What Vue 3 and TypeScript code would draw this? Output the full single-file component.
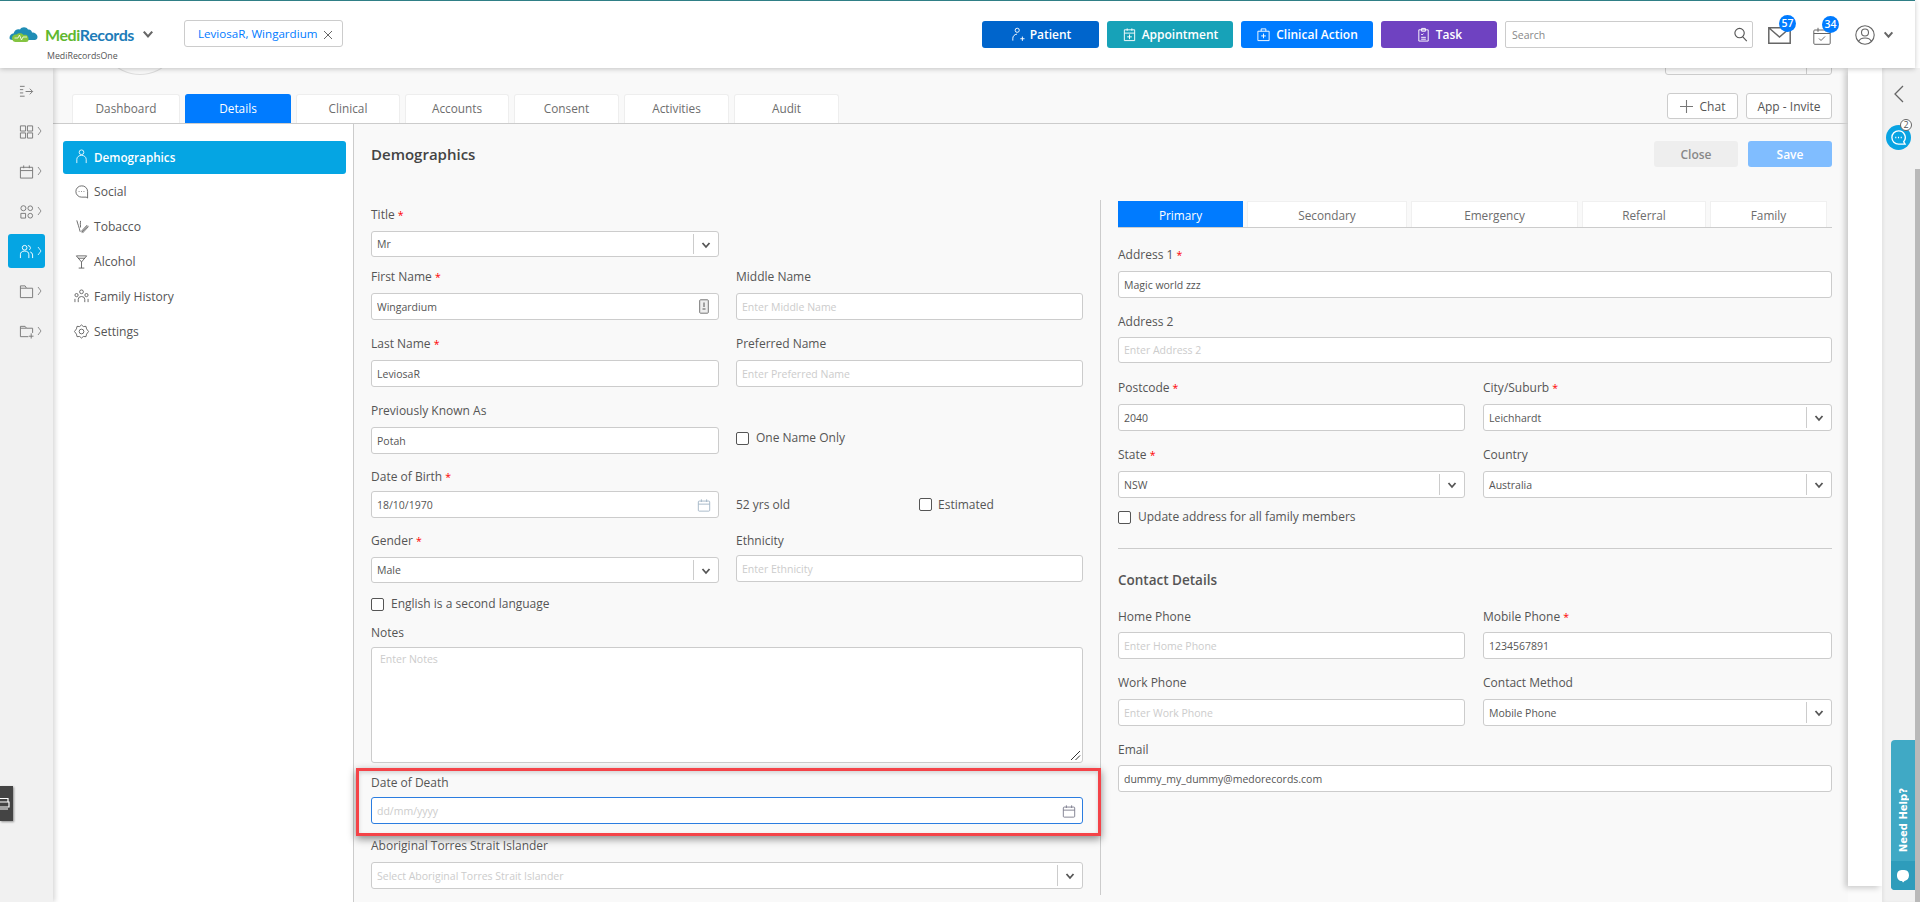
<script setup lang="ts">
interface RailItem {
  paths: string[]
  active?: boolean
}

interface NavItem {
  label: string
  paths: string[]
  active?: boolean
}

const railItems: RailItem[] = [
  { paths: ['M1 2.500h5M1 6h3.500M1 9.500h3.500M1 13h5M7 8h7.500M11.500 5l3 3-3 3'] },
  { paths: ['M1.500 2h5.500v5.500H1.500zM9 2h5.500v5.500H9zM1.500 9.500h5.500V15H1.500zM9 9.500h5.500V15H9z'] },
  { paths: ['M1.500 3.500h13V15h-13zM1.500 7h13M5 1.500v3M11 1.500v3'] },
  {
    paths: [
      'M2 4.500a2.700 2.700 0 1 0 5.400 0a2.700 2.700 0 1 0-5.400 0',
      'M9.500 4.500a2.500 2.500 0 1 0 5 0a2.500 2.500 0 1 0-5 0',
      'M2 10h5v5H2z',
      'M9.500 12.500a2.500 2.500 0 1 0 5 0a2.500 2.500 0 1 0-5 0'
    ]
  },
  {
    active: true,
    paths: [
      'M3.500 4a2.500 2.500 0 1 0 5 0a2.500 2.500 0 1 0-5 0',
      'M1.500 15v-3.500a4 3.500 0 0 1 9 0V15',
      'M9.500 1.700a2.500 2.500 0 0 1 1.500 4.600',
      'M12 8.500a3.500 3.500 0 0 1 2.500 3.200V15'
    ]
  },
  { paths: ['M1.500 14.500V2h5l1.500 2.500h6.500v10zM1.500 4.500H8'] },
  { paths: ['M1.500 13.500V2.500h5l1.500 2h6.500v5M10 13.500H1.500M1.500 4.500H8M13 10v5.500M10.500 13h5'] }
]

const navItems: NavItem[] = [
  {
    label: 'Demographics',
    active: true,
    paths: ['M5.500 3.500a2.500 2.500 0 1 0 5 0a2.500 2.500 0 1 0-5 0', 'M3 15v-4a3.500 3 0 0 1 10 0v4']
  },
  {
    label: 'Social',
    paths: [
      'M8 2a6 6 0 1 0 0 12h5l1.500 1V8A6 6 0 0 0 8 2z',
      'M5 8h.8M7.600 8h.8M10.200 8h.8'
    ]
  },
  {
    label: 'Tobacco',
    paths: [
      'M3 1.500c1 4 2.500 7 3.500 12M7 2c-.5 3 0 5 0 7',
      'M7.500 13.500L14 6.500M8.200 14.200L14.700 7.200M9 15L15.500 8'
    ]
  },
  { label: 'Alcohol', paths: ['M2.500 2h11L8 8.500zM8 8.500V15M5 15h6M4.300 4.500h7.400'] },
  {
    label: 'Family History',
    paths: [
      'M6 3a2 2 0 1 0 4 0a2 2 0 1 0-4 0',
      'M1 6.500a1.700 1.700 0 1 0 3.400 0a1.700 1.700 0 1 0-3.400 0',
      'M11.600 6.500a1.700 1.700 0 1 0 3.400 0a1.700 1.700 0 1 0-3.400 0',
      'M4.500 14v-3a3.500 3 0 0 1 7 0v3M1 14v-3.500M15 14v-3.500'
    ]
  },
  {
    label: 'Settings',
    paths: [
      'M8 1l2 1.700 2.800-.2.600 2.700L15.500 8l-2.100 2.800-.6 2.700-2.800-.2L8 15l-2-1.700-2.800.2-.6-2.700L.5 8l2.100-2.800.6-2.700 2.800.2z',
      'M5.500 8a2.500 2.500 0 1 0 5 0a2.500 2.500 0 1 0-5 0'
    ]
  }
]

const mainTabs = [
  { label: 'Dashboard', width: 108 },
  { label: 'Details', width: 106, active: true },
  { label: 'Clinical', width: 104 },
  { label: 'Accounts', width: 104 },
  { label: 'Consent', width: 105 },
  { label: 'Activities', width: 105 },
  { label: 'Audit', width: 105 }
]

const addressTabs = [
  { label: 'Primary', width: 125, active: true },
  { label: 'Secondary', width: 160 },
  { label: 'Emergency', width: 167 },
  { label: 'Referral', width: 124 },
  { label: 'Family', width: 117 }
]
</script>

<template>
  <div class="page">
    <svg class="defs" aria-hidden="true">
      <symbol id="chev" viewBox="0 0 10 10">
        <path d="M1.500 3l3.500 4 3.500-4" fill="none" stroke="currentColor" stroke-width="1.800" />
      </symbol>
      <symbol id="cal" viewBox="0 0 16 16">
        <path
          d="M2.500 3.500h11a1 1 0 0 1 1 1V14a1 1 0 0 1-1 1h-11a1 1 0 0 1-1-1V4.500a1 1 0 0 1 1-1zM1.500 7h13M5 1.500v3M11 1.500v3"
          fill="none"
          stroke="currentColor"
        />
      </symbol>
    </svg>

    <header class="topbar">
      <div class="brand">
        <div class="brand-row">
          <svg class="cloud" viewBox="0 0 30 17">
            <path
              d="M1 12c0-3 2-4.500 4-4.500C6 4 9 2.500 11.500 3.500 13 .5 18 .5 19.500 3.500c2-.5 4 1 4 3 3 0 5.500 2 5.500 4.500s-2 3-4 3H4c-2 0-3-1-3-2z"
              fill="#1f8db5"
            />
            <path
              d="M4 14c-1.500-3 1-6 4-5.500 2-2 6-1.500 7 .5 3-1 5.500 1 5 5 0 1-1 2-2.500 2H7c-1.500 0-2.500-1-3-2z"
              fill="#84c441"
            />
            <path d="M6 12h3.500l1.500-3 2 5 1.500-3h4" fill="none" stroke="#fff" stroke-width=".8" />
          </svg>
          <span class="brand-name"><span class="medi">Medi</span><span class="rec">Records</span></span>
          <svg class="brand-chev"><use href="#chev" /></svg>
        </div>
        <div class="brand-sub">MediRecordsOne</div>
      </div>

      <div class="chip">
        <span>LeviosaR, Wingardium</span>
        <svg class="chip-x" viewBox="0 0 10 10">
          <path d="M1 1l8 8M9 1l-8 8" fill="none" stroke="#666" />
        </svg>
      </div>

      <div class="actions">
        <button class="act act-patient">
          <svg viewBox="0 0 16 16">
            <path d="M5.500 3.500a2.200 2.200 0 1 0 4.400 0a2.200 2.200 0 1 0-4.400 0M3 14.500v-2.500c0-2 1.500-4 4.500-4.500M11 12.500h4.500M13.200 10.200v4.600" />
          </svg>
          Patient
        </button>
        <button class="act act-appt">
          <svg viewBox="0 0 16 16">
            <path d="M2.500 3h11v11.500h-11zM2.500 6.500h11M5.500 1.500V4M10.500 1.500V4M8 8v5M5.500 10.500h5" />
          </svg>
          Appointment
        </button>
        <button class="act act-clin">
          <svg viewBox="0 0 16 16">
            <path d="M2 4.500h12v10H2zM5.500 4.500V2h5v2.500M8 7v5M5.500 9.500h5" />
          </svg>
          Clinical Action
        </button>
        <button class="act act-task">
          <svg viewBox="0 0 16 16">
            <path d="M3 3h10v12H3zM6 1.500h4V4.500H6zM5.500 7.500l1 1 1.500-1.500M5.500 11h5M5.500 13h5" />
          </svg>
          Task
        </button>
      </div>

      <div class="search">
        <input class="search-input" placeholder="Search" />
        <svg class="search-icon" viewBox="0 0 16 16">
          <path d="M2 6.500a5 5 0 1 0 10 0a5 5 0 1 0-10 0M10.200 10.200l4.500 4.800" fill="none" stroke="#555" stroke-width="1.200" />
        </svg>
      </div>

      <div class="top-ic mail">
        <svg viewBox="0 0 23 17">
          <path d="M.8.8h21.400v15.400H.8zM.8.8L11.500 10 22.200.8" fill="none" stroke="#666" stroke-width="1.500" />
        </svg>
        <span class="badge">57</span>
      </div>
      <div class="top-ic cal">
        <svg viewBox="0 0 18 18">
          <path
            d="M1.800 3h14.400a1 1 0 0 1 1 1v12.300a1 1 0 0 1-1 1H1.800a1 1 0 0 1-1-1V4a1 1 0 0 1 1-1zM.8 6.500h16.400M5 .8v4M13 .8v4M6 11.500l2 2 4-4"
            fill="none"
            stroke="#666"
          />
        </svg>
        <span class="badge">34</span>
      </div>
      <svg class="top-user" viewBox="0 0 20 20">
        <path
          d="M.8 10a9.200 9.200 0 1 0 18.400 0a9.200 9.200 0 1 0-18.400 0M6.500 7.500a3.500 3.500 0 1 0 7 0a3.500 3.500 0 1 0-7 0M3.800 16.500c.7-2.500 3-3.500 6.200-3.500s5.500 1 6.200 3.500"
          fill="none"
          stroke="#666"
          stroke-width="1.100"
        />
      </svg>
      <svg class="top-chev"><use href="#chev" /></svg>
    </header>

    <div class="layout">
      <nav class="rail">
        <div v-for="(item, i) in railItems" :key="i" class="rail-row">
          <div class="rail-btn" :class="{ on: item.active }">
            <svg class="rail-ic" viewBox="0 0 16 16">
              <path v-for="d in item.paths" :key="d" :d="d" />
            </svg>
            <svg v-if="i > 0" class="rail-arrow" viewBox="0 0 5 10">
              <path d="M1 1l3 4-3 4" />
            </svg>
          </div>
        </div>
      </nav>

      <main class="content">
        <div class="strip">
          <span class="avatar"></span>
          <span class="clipped-select"></span>
          <div class="tabs">
            <div
              v-for="tab in mainTabs"
              :key="tab.label"
              class="tab"
              :class="{ on: tab.active }"
              :style="{ width: tab.width + 'px' }"
            >
              {{ tab.label }}
            </div>
          </div>
          <div class="strip-btns">
            <button class="ghost chat">
              <svg viewBox="0 0 12 12"><path d="M6 0v12M0 6h12" fill="none" stroke="#777" /></svg>
              Chat
            </button>
            <button class="ghost invite">App - Invite</button>
          </div>
        </div>

        <div class="split">
          <aside class="side">
            <div v-for="item in navItems" :key="item.label" class="nav" :class="{ on: item.active }">
              <svg class="nav-ic" viewBox="0 0 16 16">
                <path v-for="d in item.paths" :key="d" :d="d" />
              </svg>
              {{ item.label }}
            </div>
          </aside>

          <section class="main">
            <div class="head">
              <h2 class="title">Demographics</h2>
              <button class="btn-close">Close</button>
              <button class="btn-save">Save</button>
            </div>

            <div class="form">
              <div class="col-left">
                <div class="row">
                  <div class="field">
                    <label class="lbl">Title <i>*</i></label>
                    <div class="select short"><span>Mr</span><svg class="sel-chev"><use href="#chev" /></svg></div>
                  </div>
                </div>

                <div class="row mt-12">
                  <div class="field">
                    <label class="lbl">First Name <i>*</i></label>
                    <div class="with-ic">
                      <input class="inp" value="Wingardium" />
                      <svg class="inp-ic card" viewBox="0 0 10 15">
                        <path d="M1.500.8h7a.8.8 0 0 1 .8.8v11.800a.8.8 0 0 1-.8.8h-7a.8.8 0 0 1-.8-.8V1.600a.8.8 0 0 1 .8-.8z" fill="#eee" stroke="#777" />
                        <path d="M5 3.500v4.500M3.500 10h3" fill="none" stroke="#555" />
                      </svg>
                    </div>
                  </div>
                  <div class="field">
                    <label class="lbl">Middle Name</label>
                    <input class="inp" placeholder="Enter Middle Name" />
                  </div>
                </div>

                <div class="row mt-16">
                  <div class="field">
                    <label class="lbl">Last Name <i>*</i></label>
                    <input class="inp" value="LeviosaR" />
                  </div>
                  <div class="field">
                    <label class="lbl">Preferred Name</label>
                    <input class="inp" placeholder="Enter Preferred Name" />
                  </div>
                </div>

                <div class="row mt-16">
                  <div class="field">
                    <label class="lbl">Previously Known As</label>
                    <input class="inp" value="Potah" />
                  </div>
                  <label class="check one-name"><span class="box"></span>One Name Only</label>
                </div>

                <div class="row mt-15">
                  <div class="field tight">
                    <label class="lbl">Date of Birth <i>*</i></label>
                    <div class="with-ic">
                      <input class="inp" value="18/10/1970" />
                      <svg class="inp-ic dob"><use href="#cal" /></svg>
                    </div>
                  </div>
                  <div class="age-row">
                    <span class="age">52 yrs old</span>
                    <label class="check"><span class="box"></span>Estimated</label>
                  </div>
                </div>

                <div class="row mt-15">
                  <div class="field">
                    <label class="lbl">Gender <i>*</i></label>
                    <div class="select short"><span>Male</span><svg class="sel-chev"><use href="#chev" /></svg></div>
                  </div>
                  <div class="field tight">
                    <label class="lbl">Ethnicity</label>
                    <input class="inp" placeholder="Enter Ethnicity" />
                  </div>
                </div>

                <label class="check mt-13"><span class="box"></span>English is a second language</label>

                <div class="field tight mt-13">
                  <label class="lbl">Notes</label>
                  <div class="with-ic">
                    <textarea class="area" placeholder="Enter Notes"></textarea>
                    <svg class="inp-ic grip" viewBox="0 0 11 11">
                      <path d="M10 1L1 10M10 5.500L5.500 10" fill="none" stroke="#333" />
                    </svg>
                  </div>
                </div>

                <div class="field tight mt-12 flagged">
                  <span class="flag"></span>
                  <label class="lbl">Date of Death</label>
                  <div class="with-ic">
                    <input class="inp focus" placeholder="dd/mm/yyyy" />
                    <svg class="inp-ic dod"><use href="#cal" /></svg>
                  </div>
                </div>

                <div class="field mt-14">
                  <label class="lbl">Aboriginal Torres Strait Islander</label>
                  <div class="select empty">
                    <span>Select Aboriginal Torres Strait Islander</span>
                    <svg class="sel-chev"><use href="#chev" /></svg>
                  </div>
                </div>
              </div>

              <div class="col-right">
                <div class="addr-tabs">
                  <div
                    v-for="tab in addressTabs"
                    :key="tab.label"
                    class="addr-tab"
                    :class="{ on: tab.active }"
                    :style="{ width: tab.width + 'px' }"
                  >
                    {{ tab.label }}
                  </div>
                </div>

                <div class="field mt-19">
                  <label class="lbl">Address 1 <i>*</i></label>
                  <input class="inp" value="Magic world zzz" />
                </div>
                <div class="field snug mt-16">
                  <label class="lbl">Address 2</label>
                  <input class="inp low" placeholder="Enter Address 2" />
                </div>

                <div class="pair mt-17">
                  <div class="field">
                    <label class="lbl">Postcode <i>*</i></label>
                    <input class="inp" value="2040" />
                  </div>
                  <div class="field">
                    <label class="lbl">City/Suburb <i>*</i></label>
                    <div class="select"><span>Leichhardt</span><svg class="sel-chev"><use href="#chev" /></svg></div>
                  </div>
                </div>

                <div class="pair mt-16">
                  <div class="field">
                    <label class="lbl">State <i>*</i></label>
                    <div class="select"><span>NSW</span><svg class="sel-chev"><use href="#chev" /></svg></div>
                  </div>
                  <div class="field">
                    <label class="lbl">Country</label>
                    <div class="select"><span>Australia</span><svg class="sel-chev"><use href="#chev" /></svg></div>
                  </div>
                </div>

                <label class="check mt-11"><span class="box"></span>Update address for all family members</label>

                <hr class="rule" />
                <h3 class="sub">Contact Details</h3>

                <div class="pair mt-20">
                  <div class="field snug">
                    <label class="lbl">Home Phone</label>
                    <input class="inp" placeholder="Enter Home Phone" />
                  </div>
                  <div class="field snug">
                    <label class="lbl">Mobile Phone <i>*</i></label>
                    <input class="inp" value="1234567891" />
                  </div>
                </div>

                <div class="pair mt-16">
                  <div class="field">
                    <label class="lbl">Work Phone</label>
                    <input class="inp" placeholder="Enter Work Phone" />
                  </div>
                  <div class="field">
                    <label class="lbl">Contact Method</label>
                    <div class="select"><span>Mobile Phone</span><svg class="sel-chev"><use href="#chev" /></svg></div>
                  </div>
                </div>

                <div class="field snug mt-16">
                  <label class="lbl">Email</label>
                  <input class="inp" value="dummy_my_dummy@medorecords.com" />
                </div>
              </div>
            </div>
          </section>
        </div>
      </main>

      <div class="drawer"><div class="drawer-panel"></div></div>

      <aside class="siderail">
        <svg class="side-back" viewBox="0 0 12 20">
          <path d="M10 2L2 10l8 8" fill="none" stroke="#666" stroke-width="1.300" />
        </svg>
        <div class="bubble">
          <svg viewBox="0 0 18 18">
            <path d="M9 2a7 7 0 1 0 0 14h7l-1.500-2.500A7 7 0 0 0 9 2z" fill="none" stroke="#fff" stroke-width="1.400" />
            <path d="M5.500 9h1.200M8.400 9h1.200M11.300 9h1.200" stroke="#fff" stroke-width="1.500" />
          </svg>
          <span class="bubble-count">2</span>
        </div>
        <div class="help">
          <span class="help-text">Need Help?</span>
          <div class="help-ic">
            <svg viewBox="0 0 14 14">
              <path d="M7 1c3.500 0 6 1 6 5.500 0 3-2 5-4.500 5.500L7 13.500 6 12C3 12 1 10 1 6.500 1 2 3.500 1 7 1z" fill="#fff" />
            </svg>
          </div>
        </div>
      </aside>

      <div class="scroll"><div class="scroll-thumb"></div></div>
    </div>

    <div class="print-tab">
      <svg viewBox="0 0 13 14">
        <path d="M-2 5V1.500h10V5M-2 5h11v5H-2zM0 12h8" fill="none" stroke="#fff" stroke-width="1.200" />
      </svg>
    </div>
  </div>
</template>

<style scoped>
.page {
  position: relative;
  width: 1920px;
  height: 902px;
  overflow: hidden;
  display: flex;
  flex-direction: column;
  font-family: 'Open Sans', sans-serif;
  font-size: 12px;
  color: #555;
  background: #fff;
}

.defs {
  position: absolute;
  width: 0;
  height: 0;
}

/* top bar */
.topbar {
  position: relative;
  z-index: 5;
  flex: none;
  box-sizing: border-box;
  width: 1915px;
  height: 68px;
  padding-top: 1px;
  display: flex;
  align-items: flex-start;
  border-top: 1px solid #2f7f86;
  background: #fff;
  box-shadow: 0 1px 5px rgba(0, 0, 0, 0.22);
}

.brand {
  width: 184px;
  flex: none;
  padding: 22px 0 0 8px;
  box-sizing: border-box;
}

.brand-row {
  display: flex;
  align-items: center;
  height: 20px;
}

.cloud {
  width: 31px;
  height: 17px;
  margin-right: 6px;
}

.brand-name {
  font-family: Lato, 'Liberation Sans', sans-serif;
  font-size: 16px;
  font-weight: 700;
  letter-spacing: -0.4px;
}

.medi {
  color: #5fb82f;
}

.rec {
  color: #1d7cb8;
}

.brand-chev {
  width: 12px;
  height: 12px;
  margin-left: 8px;
  color: #666;
}

.brand-sub {
  margin: 5px 0 0 39px;
  font-size: 8.8px;
  line-height: 14px;
  color: #555;
}

.chip {
  flex: none;
  box-sizing: border-box;
  width: 159px;
  height: 27px;
  margin-top: 18px;
  padding-left: 13px;
  display: flex;
  align-items: center;
  gap: 6px;
  border: 1px solid #ccc;
  border-radius: 3px;
  color: #007bff;
  font-size: 11.6px;
}

.chip-x {
  width: 10px;
  height: 10px;
  margin-top: 2px;
}

.actions {
  margin: 19px 0 0 639px;
  display: flex;
  gap: 8px;
}

.act {
  display: flex;
  align-items: center;
  justify-content: center;
  gap: 5px;
  box-sizing: border-box;
  height: 27px;
  padding: 0;
  border: 0;
  border-radius: 3px;
  color: #fff;
  font: 600 12px 'Open Sans', sans-serif;
}

.act svg {
  width: 15px;
  height: 15px;
  fill: none;
  stroke: #fff;
  stroke-width: 1;
}

.act-patient {
  width: 117px;
  background: #0065cc;
}

.act-appt {
  width: 126px;
  background: #17a2b8;
}

.act-clin {
  width: 132px;
  background: #007bff;
}

.act-task {
  width: 116px;
  background: #6f42c1;
}

.search {
  position: relative;
  margin: 19px 0 0 8px;
  width: 248px;
}

.search-input {
  box-sizing: border-box;
  width: 100%;
  height: 27px;
  padding: 0 28px 0 6px;
  border: 1px solid #ccc;
  border-radius: 2px;
  outline: 0;
  font: 10.5px 'Open Sans', sans-serif;
}

.search-input::placeholder {
  color: #888;
}

.search-icon {
  position: absolute;
  right: 5px;
  top: 6px;
  width: 15px;
  height: 15px;
}

.top-ic {
  position: relative;
  flex: none;
}

.top-ic svg {
  display: block;
  width: 100%;
  height: 100%;
}

.mail {
  width: 23px;
  height: 17px;
  margin: 25px 0 0 15px;
}

.cal {
  width: 18px;
  height: 18px;
  margin: 25px 0 0 22px;
}

.badge {
  position: absolute;
  top: -12px;
  right: -5px;
  width: 17px;
  height: 17px;
  border-radius: 50%;
  background: #007bff;
  color: #fff;
  font-size: 10.5px;
  font-weight: 600;
  line-height: 17px;
  text-align: center;
}

.cal .badge {
  right: -8px;
  top: -11px;
}

.top-user {
  flex: none;
  width: 20px;
  height: 20px;
  margin: 23px 0 0 24px;
}

.top-chev {
  flex: none;
  width: 11px;
  height: 11px;
  margin: 27px 0 0 8px;
  color: #666;
}

/* page body */
.layout {
  flex: 1;
  min-height: 0;
  display: flex;
}

.rail {
  position: relative;
  z-index: 2;
  flex: none;
  width: 53px;
  padding-top: 3px;
  box-sizing: border-box;
  background: #f1f1f1;
  box-shadow: 2px 0 5px rgba(0, 0, 0, 0.16);
}

.rail-row {
  height: 40px;
  display: flex;
  align-items: center;
}

.rail-btn {
  box-sizing: border-box;
  width: 37px;
  height: 34px;
  margin-left: 8px;
  padding-left: 11px;
  display: flex;
  align-items: center;
  gap: 3px;
  border-radius: 3px;
  color: #777;
}

.rail-btn.on {
  background: #05a5e3;
  color: #fff;
}

.rail-ic {
  flex: none;
  width: 15px;
  height: 15px;
  fill: none;
  stroke: currentColor;
  stroke-width: 1;
}

.rail-arrow {
  flex: none;
  width: 5px;
  height: 10px;
  fill: none;
  stroke: currentColor;
  stroke-width: 0.8;
}

.content {
  flex: none;
  width: 1795px;
  display: flex;
  flex-direction: column;
  background: #f9f9f9;
}

.strip {
  position: relative;
  flex: none;
  box-sizing: border-box;
  height: 56px;
  padding-left: 19px;
  display: flex;
  align-items: flex-end;
  justify-content: space-between;
  border-bottom: 1px solid #ccc;
}

.avatar {
  position: absolute;
  left: 41px;
  top: -100px;
  width: 90px;
  height: 105px;
  border: 1px solid #ddd;
  border-radius: 50%;
}

.clipped-select {
  position: absolute;
  right: 16px;
  top: -20px;
  width: 167px;
  height: 27px;
  box-sizing: border-box;
  border: 1px solid #ccc;
  border-radius: 3px;
  background: linear-gradient(#ccc, #ccc) no-repeat right 24px top / 1px 100%;
}

.tabs {
  display: flex;
  gap: 5px;
}

.tab {
  box-sizing: border-box;
  height: 29px;
  line-height: 27px;
  text-align: center;
  border: 1px solid #eee;
  border-bottom: 0;
  border-radius: 3px 3px 0 0;
  background: #fff;
  color: #6d6d6d;
  font-size: 11.8px;
}

.tab.on {
  border-color: #007bff;
  background: #007bff;
  color: #fff;
}

.strip-btns {
  display: flex;
  gap: 8px;
  padding: 0 16px 4px 0;
}

.ghost {
  box-sizing: border-box;
  height: 26px;
  padding: 0;
  display: flex;
  align-items: center;
  justify-content: center;
  gap: 7px;
  border: 1px solid #ccc;
  border-radius: 3px;
  background: #fff;
  color: #555;
  font: 12px 'Open Sans', sans-serif;
}

.chat {
  width: 71px;
}

.chat svg {
  width: 13px;
  height: 13px;
}

.invite {
  width: 86px;
}

.split {
  flex: 1;
  min-height: 0;
  display: flex;
}

.side {
  flex: none;
  box-sizing: border-box;
  width: 301px;
  padding: 17px 7px 0 10px;
  border-right: 1px solid #ccc;
  background: #fff;
}

.nav {
  height: 35px;
  display: flex;
  align-items: center;
  gap: 4px;
  padding-left: 10px;
  color: #555;
  font-size: 12.1px;
}

.nav.on {
  box-sizing: border-box;
  height: 33px;
  padding-bottom: 2px;
  border-radius: 3px;
  background: #05a5e3;
  color: #fff;
  font-size: 11.7px;
  font-weight: 600;
}

.nav-ic {
  flex: none;
  width: 17px;
  height: 15px;
  fill: none;
  stroke: currentColor;
  stroke-width: 0.9;
}

.main {
  flex: 1;
  min-width: 0;
  padding: 17px 16px 0 17px;
}

.head {
  height: 26px;
  display: flex;
  align-items: center;
}

.title {
  flex: 1;
  margin: 0;
  font-size: 15px;
  font-weight: 600;
  color: #444;
}

.btn-close,
.btn-save {
  box-sizing: border-box;
  width: 84px;
  height: 26px;
  padding: 0;
  border: 0;
  border-radius: 3px;
  font: 600 12px 'Open Sans', sans-serif;
}

.btn-close {
  background: #eee;
  color: #888;
}

.btn-save {
  margin-left: 10px;
  background: #80bdff;
  color: #fff;
}

.form {
  display: grid;
  grid-template-columns: 712px 732px;
  column-gap: 17px;
}

.col-left {
  padding-top: 40px;
  display: flex;
  flex-direction: column;
}

.col-right {
  box-sizing: border-box;
  height: 695px;
  margin-top: 33px;
  padding: 1px 0 0 17px;
  border-left: 1px solid #ccc;
  display: flex;
  flex-direction: column;
}

.row {
  display: grid;
  grid-template-columns: 348px 347px;
  column-gap: 17px;
}

.pair {
  display: grid;
  grid-template-columns: 347px 349px;
  column-gap: 18px;
}

.mt-11 {
  margin-top: 11px;
}

.mt-12 {
  margin-top: 12px;
}

.mt-13 {
  margin-top: 13px;
}

.mt-14 {
  margin-top: 14px;
}

.mt-15 {
  margin-top: 15px;
}

.mt-16 {
  margin-top: 16px;
}

.mt-17 {
  margin-top: 17px;
}

.mt-19 {
  margin-top: 19px;
}

.mt-20 {
  margin-top: 20px;
}

.field {
  position: relative;
  display: flex;
  flex-direction: column;
  gap: 8px;
  min-width: 0;
}

.field.tight {
  gap: 6px;
}

.field.snug {
  gap: 7px;
}

.lbl {
  display: block;
  height: 16px;
  line-height: 16px;
  font-size: 12px;
  color: #555;
}

.lbl i {
  color: #f00;
  font-size: 10.5px;
  font-style: normal;
}

.inp {
  box-sizing: border-box;
  display: block;
  width: 100%;
  height: 27px;
  padding: 0 5px;
  border: 1px solid #ccc;
  border-radius: 3px;
  outline: 0;
  background: #fff;
  color: #555;
  font: 10.5px 'Open Sans', sans-serif;
}

.inp.low {
  height: 26px;
}

.inp::placeholder,
.area::placeholder {
  color: #ccc;
}

.inp.focus {
  border-color: #2b7de0;
}

.with-ic {
  position: relative;
}

.inp-ic {
  position: absolute;
}

.card {
  right: 10px;
  top: 6px;
  width: 10px;
  height: 15px;
}

.dob {
  right: 8px;
  top: 7px;
  width: 14px;
  height: 14px;
  color: #9fb2c4;
}

.dod {
  right: 7px;
  top: 7px;
  width: 14px;
  height: 14px;
  color: #778;
}

.grip {
  right: 2px;
  bottom: 2px;
  width: 11px;
  height: 11px;
}

.select {
  position: relative;
  box-sizing: border-box;
  height: 27px;
  padding-left: 5px;
  display: flex;
  align-items: center;
  border: 1px solid #ccc;
  border-radius: 3px;
  background: #fff;
  font-size: 10.5px;
}

.select.short {
  height: 26px;
}

.select.empty {
  color: #ccc;
}

.select::after {
  content: '';
  position: absolute;
  right: 24px;
  top: 2px;
  bottom: 2px;
  width: 1px;
  background: #ccc;
}

.sel-chev {
  position: absolute;
  right: 7px;
  top: 8px;
  width: 10px;
  height: 10px;
  color: #555;
}

.check {
  display: flex;
  align-items: center;
  gap: 7px;
  height: 16px;
  line-height: 16px;
  font-size: 12px;
}

.box {
  flex: none;
  box-sizing: border-box;
  width: 13px;
  height: 13px;
  border: 1px solid #555;
  border-radius: 2px;
  background: #fff;
}

.one-name {
  align-self: start;
  margin-top: 27px;
}

.age-row {
  display: grid;
  grid-template-columns: 183px auto;
  justify-content: start;
  align-items: center;
  padding-top: 22px;
  height: 27px;
}

.age-row .check {
  gap: 6px;
}

.age {
  font-size: 12px;
}

.area {
  display: block;
  box-sizing: border-box;
  width: 100%;
  height: 116px;
  padding: 4px 8px;
  border: 1px solid #ccc;
  border-radius: 3px;
  outline: 0;
  resize: none;
  background: #fff;
  color: #555;
  font: 10.5px 'Open Sans', sans-serif;
}

.flag {
  position: absolute;
  left: -15px;
  right: -18px;
  top: -7px;
  bottom: -12px;
  border: 3px solid #f44348;
  box-shadow: 0 3px 8px rgba(0, 0, 0, 0.45), inset 0 2px 4px rgba(0, 0, 0, 0.15);
  pointer-events: none;
}

.addr-tabs {
  flex: none;
  height: 27px;
  display: flex;
  gap: 4px;
  width: 714px;
  box-sizing: border-box;
  border-bottom: 1px solid #ccc;
}

.addr-tab {
  box-sizing: border-box;
  height: 26px;
  line-height: 26px;
  text-align: center;
  border: 1px solid #f0f0f0;
  border-bottom: 0;
  background: #fff;
  color: #6d6d6d;
  font-size: 11.8px;
}

.addr-tab.on {
  border-color: #007bff;
  background: #007bff;
  color: #fff;
}

.col-right > .field,
.col-right > .pair,
.col-right > .rule {
  width: 714px;
}

.rule {
  box-sizing: border-box;
  margin: 23px 0 0;
  border: 0;
  border-top: 1px solid #ccc;
}

.sub {
  margin: 22px 0 0;
  height: 18px;
  line-height: 18px;
  font-size: 13.5px;
  font-weight: 600;
  color: #555;
}

/* right side */
.drawer {
  flex: none;
  width: 34px;
  background: #fbfbfb;
}

.drawer-panel {
  height: 818px;
  background: #fff;
  box-shadow: -3px 2px 6px rgba(0, 0, 0, 0.2);
}

.siderail {
  position: relative;
  flex: none;
  width: 33px;
  background: #f1f1f1;
  box-shadow: inset 2px 0 3px rgba(0, 0, 0, 0.05);
  display: flex;
  flex-direction: column;
  align-items: center;
}

.side-back {
  width: 12px;
  height: 20px;
  margin-top: 16px;
}

.bubble {
  position: relative;
  width: 25px;
  height: 25px;
  margin-top: 21px;
  display: flex;
  align-items: center;
  justify-content: center;
  border-radius: 50%;
  background: #09a4e3;
}

.bubble svg {
  width: 17px;
  height: 17px;
}

.bubble-count {
  position: absolute;
  top: -6px;
  right: -1px;
  box-sizing: border-box;
  width: 12px;
  height: 12px;
  border: 1px solid #666;
  border-radius: 50%;
  background: #fff;
  color: #555;
  font-size: 9px;
  line-height: 10px;
  text-align: center;
}

.help {
  position: absolute;
  right: 0;
  top: 672px;
  width: 24px;
  height: 150px;
  display: flex;
  flex-direction: column;
  align-items: center;
  justify-content: flex-end;
  border-radius: 4px 0 0 4px;
  background: #40a9c5;
  overflow: hidden;
}

.help-text {
  writing-mode: vertical-rl;
  transform: rotate(180deg);
  margin-bottom: 9px;
  font-family: 'DejaVu Sans', sans-serif;
  font-size: 10px;
  font-weight: 700;
  color: #fff;
}

.help-ic {
  flex: none;
  width: 100%;
  height: 29px;
  display: flex;
  align-items: center;
  justify-content: center;
  background: #2e9cbb;
}

.help-ic svg {
  width: 14px;
  height: 14px;
}

.scroll {
  flex: 1;
  background: #f1f1f1;
  padding-top: 101px;
}

.scroll-thumb {
  height: 100%;
  background: #b9b9b9;
}

.print-tab {
  position: absolute;
  z-index: 3;
  left: 0;
  top: 786px;
  width: 13px;
  height: 35px;
  display: flex;
  align-items: center;
  background: #444;
  box-shadow: 1px 1px 2px rgba(0, 0, 0, 0.4);
}

.print-tab svg {
  width: 13px;
  height: 14px;
}
</style>

<style>
html,
body {
  margin: 0;
  overflow: hidden;
}
</style>
